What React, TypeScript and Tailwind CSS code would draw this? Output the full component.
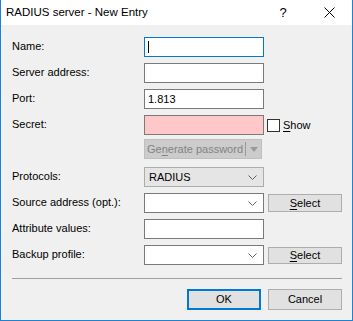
import React from "react";

const font = { fontFamily: '"Liberation Sans", Arial, sans-serif' };

function Chevron({ color = "#606060" }: { color?: string }) {
  return (
    <svg width="9" height="5" viewBox="0 0 9 5" className="shrink-0">
      <path d="M0.5 0.5 L4.5 4.5 L8.5 0.5" fill="none" stroke={color} strokeWidth="1" />
    </svg>
  );
}

function Row({ label, children }: { label: string; children: React.ReactNode }) {
  return (
    <div className="flex items-center h-[20px]">
      <div className="w-[132px] shrink-0 text-[#000] pb-[2px]">{label}</div>
      {children}
    </div>
  );
}

function TextBox({ className = "", children }: { className?: string; children?: React.ReactNode }) {
  return (
    <div
      className={[
        "w-[120px] h-[20px] border flex items-center px-[2px]",
        className || "border-[#7a7a7a] bg-white",
      ].join(" ")}
    >
      {children}
    </div>
  );
}

function Combo() {
  return (
    <div className="w-[120px] h-[20px] border border-[#7a7a7a] bg-white flex items-center justify-end pr-[6px]">
      <Chevron />
    </div>
  );
}

function Btn({ children, primary }: { children: React.ReactNode; primary?: boolean }) {
  return (
    <div
      className={[
        "w-[74px] h-[21px] bg-[#e1e1e1] flex items-center justify-center",
        primary ? "border-2 border-[#0078d7]" : "border border-[#adadad]",
      ].join(" ")}
    >
      {children}
    </div>
  );
}

export default function App() {
  return (
    <div className="w-[353px] h-[321px] flex flex-col bg-white text-[11px]" style={font}>
      {/* title bar */}
      <div className="h-[25px] flex items-center pl-[5px] bg-white border-x border-[#1883d7]">
        <div className="text-[11.5px] text-black flex-1">RADIUS server - New Entry</div>
        <div className="w-[46px] text-center text-[13px] text-black">?</div>
        <div className="w-[46px] flex justify-center">
          <svg width="11" height="11" viewBox="0 0 11 11">
            <path d="M0.5 0.5 L10.5 10.5 M10.5 0.5 L0.5 10.5" stroke="#000" strokeWidth="1" />
          </svg>
        </div>
      </div>

      {/* body */}
      <div className="flex-1 bg-[#f0f0f0] border-x border-b border-[#1883d7] pl-[11px] pr-[10px] pt-[12px] flex flex-col">
        <div className="flex flex-col gap-[6px]">
          <Row label="Name:">
            <TextBox className="border-[#0078d7] bg-white">
              <div className="w-px h-[12px] bg-black ml-px" />
            </TextBox>
          </Row>
          <Row label="Server address:">
            <TextBox />
          </Row>
          <Row label="Port:">
            <TextBox>
              <span className="pl-px">1.813</span>
            </TextBox>
          </Row>
          <Row label="Secret:">
            <TextBox className="border-[#7a7a7a] bg-[#ffc8c8]" />
            <div className="ml-[3px] w-[13px] h-[13px] border border-[#333] bg-white" />
            <div className="ml-[3px]">
              <span className="underline underline-offset-2">S</span>how
            </div>
          </Row>
        </div>

        <div className="flex mt-[4px] pl-[132px]">
          <div className="w-[118px] h-[20px] bg-[#cccccc] border border-[#bfbfbf] flex items-center text-[#838383]">
            <div className="flex-1 text-center">
              Ge<span className="underline underline-offset-2">n</span>erate password
            </div>
            <div className="w-px h-[14px] bg-[#9a9a9a]" />
            <div className="w-[15px] flex justify-center">
              <svg width="8" height="5" viewBox="0 0 8 5">
                <path d="M0 0 L8 0 L4 5 Z" fill="#9a9a9a" />
              </svg>
            </div>
          </div>
        </div>

        <div className="flex flex-col gap-[6px] mt-[8px]">
          <Row label="Protocols:">
            <div className="w-[120px] h-[20px] border border-[#adadad] bg-[#e5e5e5] flex items-center pl-[4px] pr-[6px]">
              <span className="flex-1">RADIUS</span>
              <Chevron />
            </div>
          </Row>
          <Row label="Source address (opt.):">
            <Combo />
            <div className="ml-[4px] w-[74px] h-[18px] bg-[#e1e1e1] border border-[#adadad] flex items-center justify-center">
              <span className="underline underline-offset-2">S</span>elect
            </div>
          </Row>
          <Row label="Attribute values:">
            <TextBox />
          </Row>
          <Row label="Backup profile:">
            <Combo />
            <div className="ml-[4px] w-[74px] h-[17px] bg-[#e1e1e1] border border-[#adadad] flex items-center justify-center">
              <span className="underline underline-offset-2">S</span>elect
            </div>
          </Row>
        </div>

        <div className="mt-[13px] h-px bg-[#a0a0a0]" />

        <div className="flex justify-end gap-[7px] mt-[10px]">
          <Btn primary>OK</Btn>
          <Btn>Cancel</Btn>
        </div>
      </div>
    </div>
  );
}
